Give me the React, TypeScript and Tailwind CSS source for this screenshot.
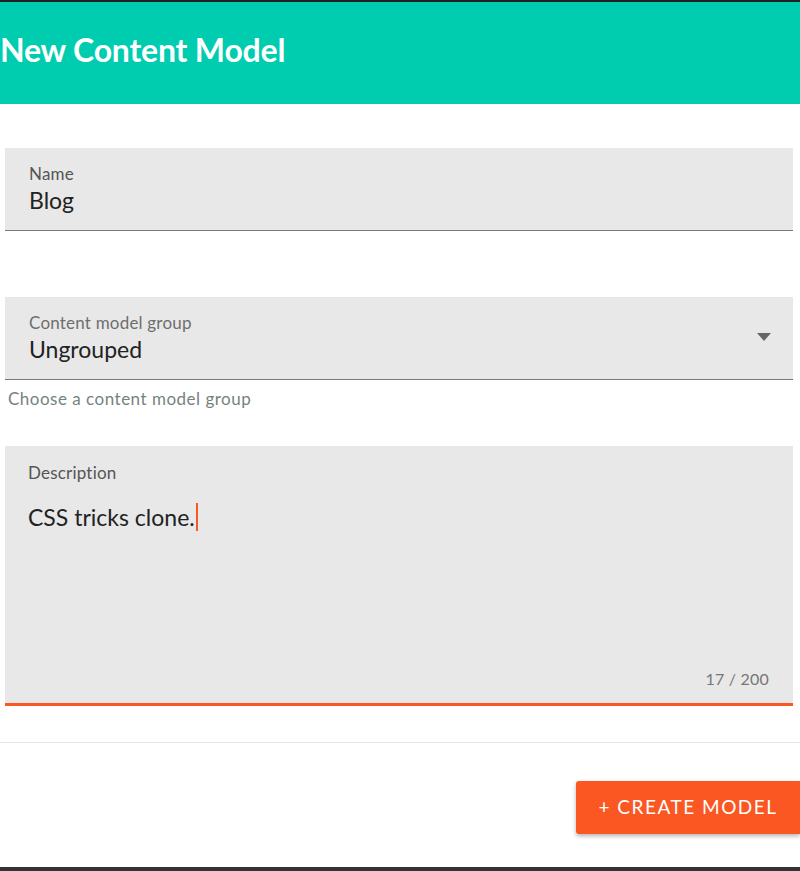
const font = { fontFamily: 'Lato, "Noto Sans", sans-serif' };

const Field = ({ label, value, select }: { label: string; value: string; select?: boolean }) => (
  <div className="ml-[5px] w-[788px] h-[83px] bg-[#e8e8e8] border-b border-[#7a7a7a] flex items-center pl-[24px] pr-[22px]">
    <div className="flex-1 flex flex-col pt-[1px]">
      <span className={`text-[17px] leading-[20px] tracking-[0.2px] ${select ? 'text-[#6e6e6e]' : 'text-[#555]'}`}>{label}</span>
      <span className="text-[23px] leading-[32px] text-[#222]">{value}</span>
    </div>
    {select && (
      <svg width="14" height="8" viewBox="0 0 14 8" className="mt-[-3px]">
        <path d="M0 0h14L7 8z" fill="#666" />
      </svg>
    )}
  </div>
);

const App = () => {
  return (
    <div className="h-[871px] w-[800px] bg-white flex flex-col overflow-hidden" style={font}>
      {/* Header */}
      <div className="border-t-2 border-[#222] h-[104px] bg-[#00ccb0] flex items-center">
        <h1 className="text-[32px] font-bold text-white mt-[-6px] tracking-[-0.2px]">New Content Model</h1>
      </div>

      <div className="pt-[44px]">
        <Field label="Name" value="Blog" />
      </div>

      <div className="pt-[66px]">
        <Field label="Content model group" value="Ungrouped" select />
        <p className="pl-[8px] pt-[8px] text-[17px] leading-[22px] text-[#76837d] tracking-[0.5px]">Choose a content model group</p>
      </div>

      {/* Description */}
      <div className="pt-[36px]">
        <div className="ml-[5px] w-[788px] h-[260px] bg-[#e8e8e8] border-b-[3px] border-[#fa5723] flex flex-col pl-[23px] pr-[24px] pt-[17px] pb-[14px]">
          <span className="text-[17px] leading-[20px] text-[#555] tracking-[0.2px]">Description</span>
          <div className="mt-[18px] text-[23px] leading-[32px] text-[#222] flex items-center">
            CSS tricks clone.
            <span className="inline-block w-[2px] h-[28px] bg-[#fa5723] ml-[1px]" />
          </div>
          <span className="mt-auto self-end text-[16px] leading-[20px] text-[#777] tracking-[0.2px]">17 / 200</span>
        </div>
      </div>

      <div className="mt-[36px] h-px bg-[#e4e4e4]" />

      <div className="flex justify-end pt-[38px]">
        <button className="w-[224px] h-[53px] bg-[#fa5723] text-white text-[19px] tracking-[1.5px] rounded-l-[3px] shadow-[0_2px_4px_rgba(0,0,0,0.3)]">
          + CREATE MODEL
        </button>
      </div>

      <div className="mt-auto h-[4px] bg-[#333]" />
    </div>
  );
};

export default App;
